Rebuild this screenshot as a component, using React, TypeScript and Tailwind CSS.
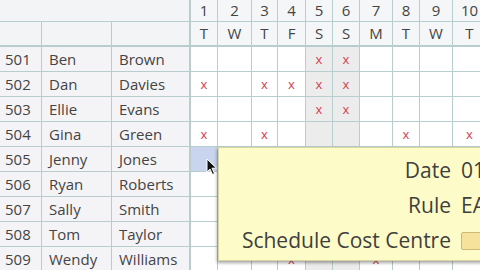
import { Fragment } from 'react';

const days = [
  { n: '1', d: 'T', w: 27 },
  { n: '2', d: 'W', w: 34 },
  { n: '3', d: 'T', w: 26 },
  { n: '4', d: 'F', w: 28 },
  { n: '5', d: 'S', w: 27, weekend: true },
  { n: '6', d: 'S', w: 27, weekend: true },
  { n: '7', d: 'M', w: 33 },
  { n: '8', d: 'T', w: 27 },
  { n: '9', d: 'W', w: 33 },
  { n: '10', d: 'T', w: 34 },
];

const people = [
  { id: '501', first: 'Ben', last: 'Brown', off: [5, 6] },
  { id: '502', first: 'Dan', last: 'Davies', off: [1, 3, 4, 5, 6] },
  { id: '503', first: 'Ellie', last: 'Evans', off: [5, 6] },
  { id: '504', first: 'Gina', last: 'Green', off: [1, 3, 8, 10] },
  { id: '505', first: 'Jenny', last: 'Jones', off: [] },
  { id: '506', first: 'Ryan', last: 'Roberts', off: [] },
  { id: '507', first: 'Sally', last: 'Smith', off: [] },
  { id: '508', first: 'Tom', last: 'Taylor', off: [] },
  { id: '509', first: 'Wendy', last: 'Williams', off: [4, 7] },
];

const line = 'border-[#b8cdcd]';

const Cursor = () => (
  <svg width="12" height="18" viewBox="0 0 12 18" className="absolute left-[206px] top-[158px]">
    <path d="M1 1 L1 14 L4 11 L6.5 16.5 L8.5 15.5 L6 10.2 L10.5 10.2 Z" fill="#111" stroke="#fff" strokeWidth="1" />
  </svg>
);

const App = () => {
  return (
    <div className="relative w-[480px] h-[270px] overflow-hidden bg-white text-[#444] font-['Open_Sans',sans-serif]">
      <div
        className="grid"
        style={{
          gridTemplateColumns: `42px 70px 79px ${days.map((d) => d.w + 'px').join(' ')}`,
          gridTemplateRows: '22px 25px repeat(9, 25px)',
        }}
      >
        {/* header row 1 */}
        <div className={`col-span-3 bg-[#f3f4f5] border-b ${line} border-r-2`} />
        {days.map((d) => (
          <div
            key={'n' + d.n}
            className={`flex items-center justify-center text-[15px] bg-[#f5f6f7] border-b border-r ${line}`}
          >
            {d.n}
          </div>
        ))}

        {/* header row 2 */}
        <div className={`bg-[#f3f4f5] border-b-2 border-r ${line}`} />
        <div className={`bg-[#f3f4f5] border-b-2 border-r ${line}`} />
        <div className={`bg-[#f3f4f5] border-b-2 border-r-2 ${line}`} />
        {days.map((d) => (
          <div
            key={'d' + d.n}
            className={`flex items-center justify-center text-[15px] bg-[#f5f6f7] border-b-2 border-r ${line}`}
          >
            {d.d}
          </div>
        ))}

        {people.map((p) => (
          <Fragment key={p.id}>
            <div className={`flex items-center pl-[5px] text-[15px] bg-[#f4f4f6] border-b border-r ${line}`}>{p.id}</div>
            <div className={`flex items-center pl-[7px] text-[15px] bg-[#f4f4f6] border-b border-r ${line}`}>{p.first}</div>
            <div className={`flex items-center pl-[7px] text-[15px] bg-[#f4f4f6] border-b border-r-2 ${line}`}>{p.last}</div>
            {days.map((d, i) => {
              const selected = p.id === '505' && i === 0;
              const bg = selected ? 'bg-[#c9d5ef]' : d.weekend ? 'bg-[#ececec]' : 'bg-white';
              return (
                <div
                  key={p.id + d.n}
                  className={`flex items-center justify-center text-[13px] leading-none text-[#d2414f] border-b border-r ${line} ${bg}`}
                >
                  {p.off.includes(i + 1) ? 'x' : ''}
                </div>
              );
            })}
          </Fragment>
        ))}
      </div>

      {/* tooltip */}
      <div className="absolute left-[218px] top-[147px] w-[300px] h-[114px] bg-[#fdfcc9] border border-[#d8d6a0] shadow-[-1px_2px_3px_rgba(0,0,0,0.35)]">
        <div className="grid grid-cols-[232px_1fr] gap-x-[10px] gap-y-[10px] pt-[10px] text-[21px] leading-[25px] text-[#3f3f3f]">
          <div className="text-right">Date</div>
          <div>01/02</div>
          <div className="text-right">Rule</div>
          <div>EARLY</div>
          <div className="text-right whitespace-nowrap">Schedule Cost Centre</div>
          <div className="flex items-center">
            <div className="w-[20px] h-[18px] bg-[#f7e29c] border border-[#cdb878] rounded-[2px]" />
          </div>
        </div>
      </div>

      <Cursor />
    </div>
  );
};

export default App;
